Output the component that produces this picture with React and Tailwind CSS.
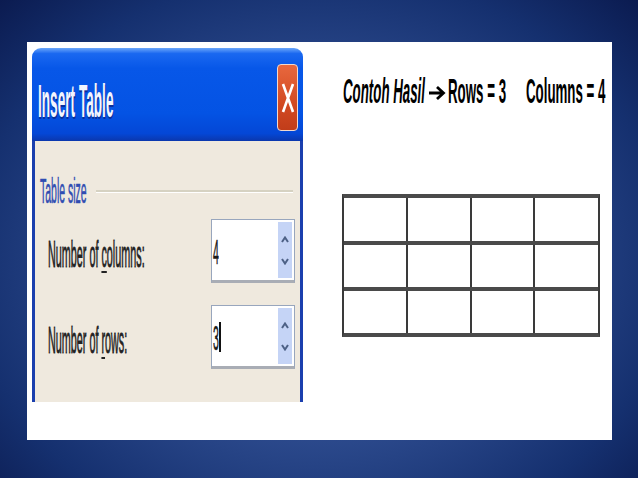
import React from "react";

function SpinBox({ value, cursor }) {
  return (
    <div className="flex h-[64px] w-[84px] shrink-0 border border-[#98a6bd] border-b-[3px] border-b-[#a9adb5] bg-white">
      <div className="flex flex-1 items-center pl-[1px] pt-[2px]">
        <span className="inline-block origin-left scale-x-[0.3] text-[35px] leading-none text-[#1a1a1a] whitespace-nowrap [-webkit-text-stroke:0.6px_#1a1a1a]">
          {value}
        </span>
        {cursor && <span className="-ml-[13px] h-[30px] w-[2px] bg-[#111]" />}
      </div>
      <div className="my-[2px] mr-[2px] flex w-[14px] flex-col items-center justify-around bg-[#c5d4f6] py-[6px]">
        <svg width="8" height="7" viewBox="0 0 8 7">
          <path d="M1 6 L4 1.5 L7 6" fill="none" stroke="#4d6186" strokeWidth="2" />
        </svg>
        <svg width="8" height="7" viewBox="0 0 8 7">
          <path d="M1 1 L4 5.5 L7 1" fill="none" stroke="#4d6186" strokeWidth="2" />
        </svg>
      </div>
    </div>
  );
}

function FieldRow({ before, hotkey, after, value, cursor }) {
  return (
    <div className="flex items-center pl-[13px] pr-[5px]">
      <div className="w-[163px] shrink-0 pt-[8px]">
        <span className="inline-block origin-left scale-x-[0.3] text-[36px] leading-none text-[#222] whitespace-nowrap [-webkit-text-stroke:0.8px_#222]">
          {before}
          <span className="underline decoration-2 underline-offset-4">{hotkey}</span>
          {after}
        </span>
      </div>
      <SpinBox value={value} cursor={cursor} />
    </div>
  );
}

function InsertTableDialog() {
  return (
    <div className="ml-[5px] mt-[6px] flex h-[354px] w-[271px] shrink-0 flex-col">
      <div className="flex h-[93px] shrink-0 rounded-t-[9px] bg-[linear-gradient(to_bottom,#6aa6fa_0%,#1a68f0_6%,#0757e8_22%,#0453e4_70%,#0447d6_92%,#0b37ad_100%)]">
        <div className="w-[245px] shrink-0 pl-[6px] pt-[29px]">
          <span className="inline-block origin-left scale-x-[0.29] text-[47px] font-bold leading-none text-[#f3f6ff] whitespace-nowrap [text-shadow:2px_2px_0_#0a2f99]">
            Insert Table
          </span>
        </div>
        <div className="mt-[16px] flex h-[67px] w-[21px] shrink-0 items-center justify-center rounded-[4px] border border-[#f2d8cc] bg-[linear-gradient(to_bottom,#e8683e,#d24a22_60%,#c13d1a)]">
          <svg width="14" height="32" viewBox="0 0 14 32">
            <path d="M2 2 L12 30 M12 2 L2 30" stroke="#ffffff" strokeWidth="2.6" fill="none" />
          </svg>
        </div>
      </div>

      <div className="flex flex-1 flex-col border-x-[3px] border-[#1b3fae] bg-[#efe9de]">
        <div className="mt-[32px] flex items-center pl-[5px] pr-[7px]">
          <div className="w-[47px] shrink-0">
            <span className="inline-block origin-left scale-x-[0.3] text-[35px] leading-none text-[#2f4db2] whitespace-nowrap [-webkit-text-stroke:0.6px_#2f4db2]">
              Table size
            </span>
          </div>
          <div className="ml-[9px] h-[3px] flex-1 border-t-2 border-[#d6d2c2] border-b border-b-white" />
        </div>

        <div className="mt-[9px] flex flex-col gap-[22px]">
          <FieldRow before="Number of " hotkey="c" after="olumns:" value="4" />
          <FieldRow before="Number of " hotkey="r" after="ows:" value="3" cursor />
        </div>
      </div>
    </div>
  );
}

function HeaderWord({ children, width, italic }) {
  return (
    <div className="shrink-0" style={{ width }}>
      <span
        className={
          italic
            ? "inline-block origin-left scale-x-[0.38] text-[35px] font-bold italic leading-none text-black whitespace-nowrap"
            : "inline-block origin-left scale-x-[0.38] text-[35px] font-bold leading-none text-black whitespace-nowrap"
        }
      >
        {children}
      </span>
    </div>
  );
}

function ResultTable() {
  const rows = [43, 42, 42];
  const cols = [64, 65, 64, 65];
  return (
    <div className="mt-[86px] w-[258px] border-y-[4px] border-[#4a4a4a] border-x-2 border-x-[#3a3a3a]">
      {rows.map((height, rowIndex) => (
        <div
          className={rowIndex > 0 ? "flex border-t-[4px] border-[#4a4a4a]" : "flex"}
          key={rowIndex}
        >
          {cols.map((width, colIndex) => (
            <div
              className={colIndex > 0 ? "border-l-2 border-[#3a3a3a] bg-white" : "bg-white"}
              key={colIndex}
              style={{ width: colIndex === 0 ? width - 2 : width - 1, height }}
            />
          ))}
        </div>
      ))}
    </div>
  );
}

export default function App() {
  return (
    <div className="h-[478px] w-[638px] overflow-hidden bg-[radial-gradient(ellipse_at_50%_55%,#4868a8_0%,#2d4b8e_45%,#15306f_78%,#0b1b50_100%)] pl-[27px] pt-[42px] font-['Liberation_Sans',Arial,sans-serif]">
      <div className="flex h-[398px] w-[585px] bg-white">
        <InsertTableDialog />

        <div className="flex flex-1 flex-col pl-[39px] pt-[31px]">
          <div className="ml-[1px] flex h-[35px] items-start">
            <HeaderWord italic width={85}>Contoh Hasil</HeaderWord>
            <div className="flex h-[35px] w-[20px] shrink-0 items-center pt-[5px]">
              <svg width="18" height="16" viewBox="0 0 18 16">
                <path d="M1 8 H15 M9 2 L15.5 8 L9 14" fill="none" stroke="#000" strokeWidth="2.8" />
              </svg>
            </div>
            <HeaderWord width={78}>Rows = 3</HeaderWord>
            <HeaderWord width={80}>Columns = 4</HeaderWord>
          </div>
          <ResultTable />
        </div>
      </div>
    </div>
  );
}
